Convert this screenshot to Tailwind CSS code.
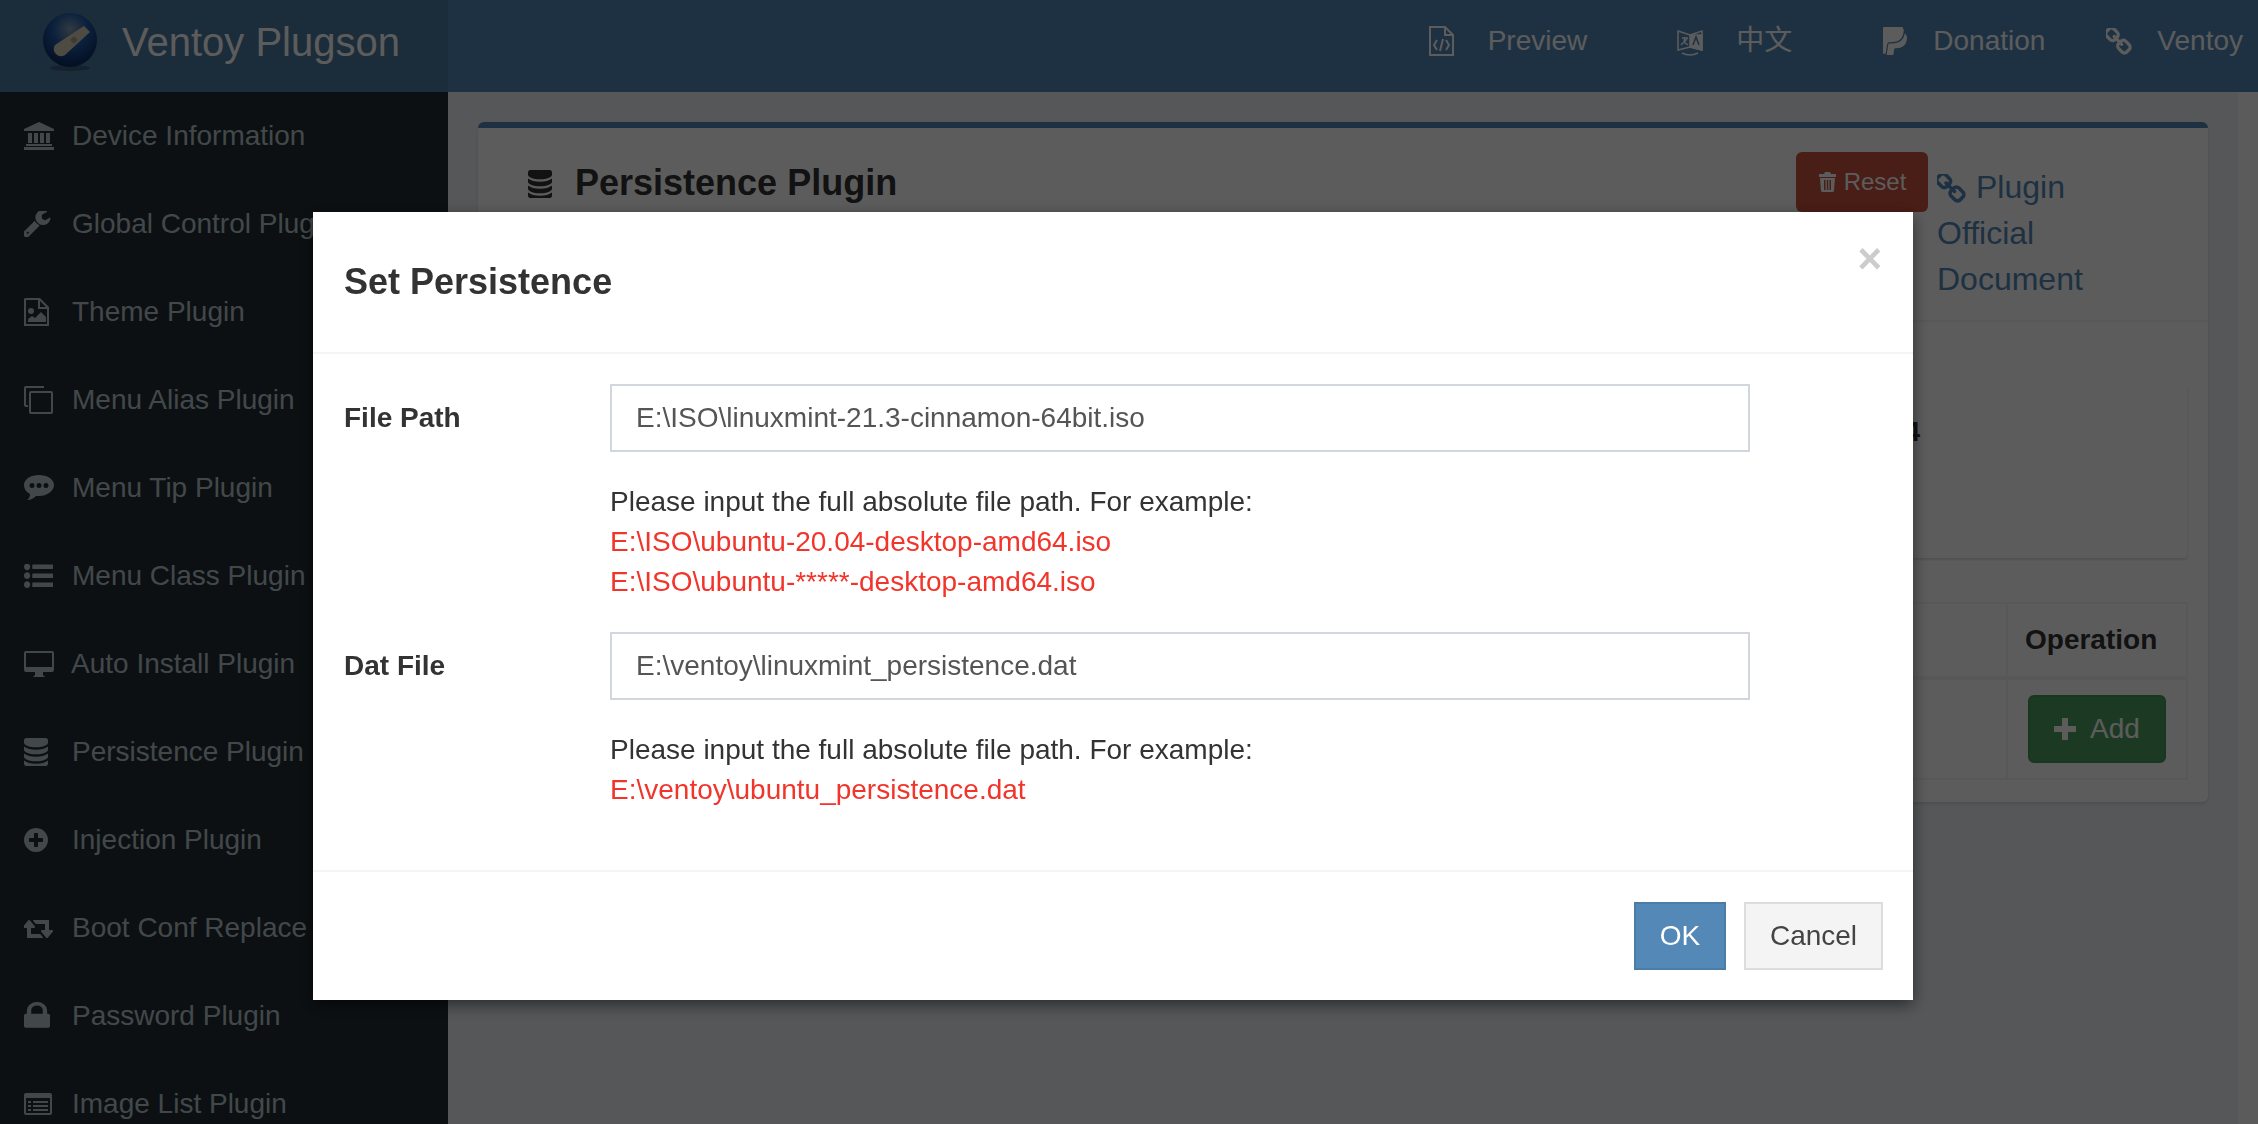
<!DOCTYPE html>
<html lang="en">

<head>
  <meta charset="UTF-8">
  <meta name="viewport" content="width=device-width, initial-scale=1.0">
  <title>Ventoy Plugson</title>
  <script src="https://cdn.jsdelivr.net/npm/@tailwindcss/browser@4"></script>
</head>

<body class="h-screen overflow-hidden bg-[#ecf0f5] font-['Liberation_Sans','Noto_Sans_CJK_SC',sans-serif] text-[28px] text-[#333]">

  <!-- top bar -->
  <header class="flex h-[92px] bg-[#5388b7] text-white">
    <div class="flex w-[448px] shrink-0 items-center bg-[#4b7aa1] pb-[8px] pl-[40px]">
      <svg class="h-[60px] w-[60px]" viewBox="0 0 60 60">
        <defs>
          <radialGradient id="ball" cx="50%" cy="30%" r="65%">
            <stop offset="0" stop-color="#8a9fb8" />
            <stop offset="0.5" stop-color="#1f5aa8" />
            <stop offset="1" stop-color="#0d2f66" />
          </radialGradient>
        </defs>
        <ellipse cx="30" cy="56" rx="20" ry="3" fill="#3c5f80" />
        <circle cx="30" cy="28" r="27" fill="url(#ball)" />
        <path d="M44 14l6 6-25 23q-5 3-9-1t-1-9z" fill="#d8d2b8" />
        <path d="M34 24l4 4-4 4-4-4z" fill="#aaa48c" />
      </svg>
      <span class="ml-[22px] text-[40px]">Ventoy Plugson</span>
    </div>
    <nav class="flex flex-1 items-center justify-end pb-[10px] pr-[15px]">
      <a class="flex items-center">
        <svg class="h-[30px] w-[25px]" viewBox="0 0 25 30" fill="none" stroke="currentColor" stroke-width="2"><path d="M1 1h15l8 8v20H1zM16 1v8h8" /><path d="M8 14l-3 5 3 5M17 14l3 5-3 5M14 13l-3 12" /></svg>
        <span class="ml-[34px]">Preview</span>
      </a>
      <a class="ml-[90px] flex items-center">
        <svg class="h-[30px] w-[26px]" viewBox="0 0 26 30" fill="none" stroke="currentColor" stroke-width="1.5"><path d="M1 5l12 4 12-4v19l-12-3-12 3z" /><path d="M13 9h12v15l-12-3z" fill="currentColor" /><path d="M5 12h6M8 11l-1 5 4 3M10 13l-6 6" /><path d="M16 19l3-8 3 8" stroke="#5388b7" /><path d="M5 27q8 4 16 0" /></svg>
        <span class="ml-[33px]">中文</span>
      </a>
      <a class="ml-[91px] flex items-center">
        <svg class="h-[28px] w-[24px]" viewBox="230 128 1300 1536" fill="currentColor" preserveAspectRatio="none"><path d="M1519 646q18 84-4 204-87 444-565 444h-44q-25 0-44 16.5t-24 42.5l-4 19-55 346-2 15q-5 26-24.5 42.5t-44.5 16.5h-251q-21 0-33-15t-9-36q9-56 26.5-168t26.5-168 27-167.5 27-167.5q5-37 43-37h131q133 2 236-21 175-39 287-144 102-95 155-246 24-70 35-133 1-6 2.5-7.5t3.5-1 6 3.5q79 59 98 162zm-172-282q0 107-46 236-80 233-302 315-113 40-239 42 0 1-90 1l-90-1q-100 0-118 96-2 8-85 530-1 10-12 10h-295q-22 0-36.5-16.5t-11.5-38.5l232-1471q5-29 27.5-48t51.5-19h598q34 0 97.5 13t111.5 32q107 41 163.5 123t56.5 196z" /></svg>
        <span class="ml-[26px]">Donation</span>
      </a>
      <a class="ml-[61px] flex items-center">
        <svg class="h-[27px] w-[26px]" viewBox="128 128 1536 1536" fill="currentColor" preserveAspectRatio="none"><path d="M1456 1216q0-40-28-68l-208-208q-28-28-68-28-42 0-72 32 3 3 19 18.5t21.5 21.5 15 19 13 25.5 3.5 27.5q0 40-28 68t-68 28q-15 0-27.5-3.5t-25.5-13-19-15-21.5-21.5-18.5-19q-33 31-33 73 0 40 28 68l206 207q27 27 68 27 40 0 68-26l147-146q28-28 28-67zm-703-705q0-40-28-68l-206-207q-28-28-68-28-39 0-68 27l-147 146q-28 28-28 67 0 40 28 68l208 208q27 27 68 27 42 0 72-31-3-3-19-18.5t-21.5-21.5-15-19-13-25.5-3.5-27.5q0-40 28-68t68-28q15 0 27.5 3.5t25.5 13 19 15 21.5 21.5 18.5 19q33-31 33-73zm895 705q0 120-85 203l-147 146q-83 83-203 83-121 0-204-85l-206-207q-83-83-83-203 0-123 88-209l-88-88q-86 88-208 88-120 0-204-84l-208-208q-84-84-84-204t85-203l147-146q83-83 203-83 121 0 204 85l206 207q83 83 83 203 0 123-88 209l88 88q86-88 208-88 120 0 204 84l208 208q84 84 84 204z" /></svg>
        <span class="ml-[25px]">Ventoy</span>
      </a>
    </nav>
  </header>

  <div class="flex h-[1032px]">

    <!-- sidebar -->
    <aside class="w-[448px] shrink-0 overflow-hidden whitespace-nowrap bg-[#222d32] text-[#b8c7ce]">
      <a class="flex h-[88px] items-center pl-[24px]">
        <span class="w-[49px] shrink-0"><svg class="h-[28px] w-[30px]" viewBox="0 0 30 28" fill="currentColor"><path d="M15 0l15 7v2H0V7zM4 11h4v10H4zM10 11h4v10h-4zM16 11h4v10h-4zM22 11h4v10h-4zM2 22h26v2H2zM0 25h30v3H0z" /></svg></span><span class="-ml-[1px]">Device Information</span>
      </a>
      <a class="flex h-[88px] items-center pl-[24px]">
        <span class="w-[49px] shrink-0"><svg class="h-[26px] w-[27px]" viewBox="128 128 1536 1536" fill="currentColor"><path d="M384 1408q0-26-19-45t-45-19-45 19-19 45 19 45 45 19 45-19 19-45zm644-420l-682 682q-37 37-90 37-52 0-91-37l-106-108q-38-36-38-90 0-53 38-91l681-681q39 98 114.5 173.5t173.5 114.5zm634-435q0 39-23 106-47 134-164.5 217.5t-258.5 83.5q-185 0-316.5-131.5t-131.5-316.5 131.5-316.5 316.5-131.5q58 0 121.5 16.5t107.5 46.5q16 11 16 28t-16 28l-293 169v224l193 107q5-3 79-48.5t135.5-81 70.5-35.5q15 0 23.5 10t8.5 25z" /></svg></span><span class="-ml-[1px]">Global Control Plugin</span>
      </a>
      <a class="flex h-[88px] items-center pl-[24px]">
        <span class="w-[49px] shrink-0"><svg class="h-[28px] w-[25px]" viewBox="0 0 25 28" fill="currentColor"><path fill-rule="evenodd" d="M1 0h15l9 9v19H0V1zM2 2v24h21V11h-9V2zM16 3v6h6z" /><circle cx="7" cy="13" r="3" /><path d="M4 24v-3l4-3 3 2 6-6 5 5v5z" /></svg></span><span class="-ml-[1px]">Theme Plugin</span>
      </a>
      <a class="flex h-[88px] items-center pl-[24px]">
        <span class="w-[49px] shrink-0"><svg class="h-[28px] w-[29px]" viewBox="0 0 29 28" fill="none" stroke="currentColor" stroke-width="2"><path d="M20 1H2Q1 1 1 2v17q0 1 1 1h2" /><path d="M7 6h20q1 0 1 1v19q0 1-1 1H7q-1 0-1-1V7q0-1 1-1z" /></svg></span><span class="-ml-[1px]">Menu Alias Plugin</span>
      </a>
      <a class="flex h-[88px] items-center pl-[24px]">
        <span class="w-[49px] shrink-0"><svg class="h-[26px] w-[30px]" viewBox="0 0 30 26" fill="currentColor"><path fill-rule="evenodd" d="M15 0c8 0 15 4 15 10s-7 11-15 11h-3c-2 2-5 4-9 4 2-1 3-3 3-6-4-2-6-5-6-9C0 4 7 0 15 0zM8 8a2.500 2.500 0 100 5 2.500 2.500 0 000-5zM15 8a2.500 2.500 0 100 5 2.500 2.500 0 000-5zM22 8a2.500 2.500 0 100 5 2.500 2.500 0 000-5z" /></svg></span><span class="-ml-[1px]">Menu Tip Plugin</span>
      </a>
      <a class="flex h-[88px] items-center pl-[24px]">
        <span class="w-[49px] shrink-0"><svg class="h-[24px] w-[29px]" viewBox="0 224 1792 1376" preserveAspectRatio="none" fill="currentColor"><path d="M384 1408q0 80-56 136t-136 56-136-56-56-136 56-136 136-56 136 56 56 136zm0-512q0 80-56 136t-136 56-136-56-56-136 56-136 136-56 136 56 56 136zm1408 416v192q0 13-9.5 22.5t-22.5 9.5h-1216q-13 0-22.5-9.5t-9.5-22.5v-192q0-13 9.5-22.5t22.5-9.5h1216q13 0 22.5 9.5t9.5 22.5zm-1408-928q0 80-56 136t-136 56-136-56-56-136 56-136 136-56 136 56 56 136zm1408 416v192q0 13-9.5 22.5t-22.5 9.5h-1216q-13 0-22.5-9.5t-9.5-22.5v-192q0-13 9.5-22.5t22.5-9.5h1216q13 0 22.5 9.5t9.5 22.5zm0-512v192q0 13-9.5 22.5t-22.5 9.5h-1216q-13 0-22.5-9.5t-9.5-22.5v-192q0-13 9.5-22.5t22.5-9.5h1216q13 0 22.5 9.5t9.5 22.5z" /></svg></span><span class="-ml-[1px]">Menu Class Plugin</span>
      </a>
      <a class="flex h-[88px] items-center pl-[24px]">
        <span class="w-[47px] shrink-0"><svg class="h-[26px] w-[30px]" viewBox="0 0 30 26" fill="currentColor"><path fill-rule="evenodd" d="M2 0h26a2 2 0 012 2v17a2 2 0 01-2 2H19v3l2 2H9l2-2v-3H2a2 2 0 01-2-2V2a2 2 0 012-2zM2 2v14h26V2z" /></svg></span>Auto Install Plugin
      </a>
      <a class="flex h-[88px] items-center pl-[24px]">
        <span class="w-[49px] shrink-0"><svg class="h-[28px] w-[24px]" viewBox="128 128 1536 1536" preserveAspectRatio="none" fill="currentColor"><path d="M896 768q237 0 443-43t325-127v170q0 69-103 128t-280 93.5-385 34.5-385-34.5-280-93.5-103-128v-170q119 84 325 127t443 43zm0 768q237 0 443-43t325-127v170q0 69-103 128t-280 93.5-385 34.5-385-34.5-280-93.5-103-128v-170q119 84 325 127t443 43zm0-384q237 0 443-43t325-127v170q0 69-103 128t-280 93.5-385 34.5-385-34.5-280-93.5-103-128v-170q119 84 325 127t443 43zm0-1152q208 0 385 34.5t280 93.5 103 128v128q0 69-103 128t-280 93.5-385 34.5-385-34.5-280-93.5-103-128v-128q0-69 103-128t280-93.5 385-34.5z" /></svg></span><span class="-ml-[1px]">Persistence Plugin</span>
      </a>
      <a class="flex h-[88px] items-center pl-[24px]">
        <span class="w-[49px] shrink-0"><svg class="h-[24px] w-[24px]" viewBox="128 128 1536 1536" fill="currentColor"><path d="M1344 960v-128q0-26-19-45t-45-19h-256v-256q0-26-19-45t-45-19h-128q-26 0-45 19t-19 45v256h-256q-26 0-45 19t-19 45v128q0 26 19 45t45 19h256v256q0 26 19 45t45 19h128q26 0 45-19t19-45v-256h256q26 0 45-19t19-45zm320-64q0 209-103 385.5t-279.5 279.5-385.5 103-385.5-103-279.5-279.5-103-385.5 103-385.5 279.5-279.5 385.5-103 385.5 103 279.5 279.5 103 385.5z" /></svg></span><span class="-ml-[1px]">Injection Plugin</span>
      </a>
      <a class="flex h-[88px] items-center pl-[24px]">
        <span class="w-[49px] shrink-0"><svg class="h-[20px] w-[30px]" viewBox="0 256 1920 1280" preserveAspectRatio="none" fill="currentColor"><path d="M1216 1504q0 13-9.5 22.5t-22.5 9.5h-960q-8 0-13.5-2t-9-7-5.5-8-3-11.5-1-11.5v-600h-192q-26 0-45-19t-19-45q0-24 15-41l320-384q19-22 49-22t49 22l320 384q15 17 15 41 0 26-19 45t-45 19h-192v384h576q16 0 25 11l160 192q7 10 7 21zm640-416q0 24-15 41l-320 384q-20 23-49 23t-49-23l-320-384q-15-17-15-41 0-26 19-45t45-19h192v-384h-576q-16 0-25-12l-160-192q-7-9-7-20 0-13 9.5-22.5t22.5-9.5h960q8 0 13.5 2t9 7 5.5 8 3 11.5 1 11.5v600h192q26 0 45 19t19 45z" /></svg></span><span class="-ml-[1px]">Boot Conf Replace Plugin</span>
      </a>
      <a class="flex h-[88px] items-center pl-[24px]">
        <span class="w-[49px] shrink-0"><svg class="h-[28px] w-[26px]" viewBox="320 128 1152 1536" preserveAspectRatio="none" fill="currentColor"><path d="M640 768h512v-192q0-106-75-181t-181-75-181 75-75 181v192zm832 96v576q0 40-28 68t-68 28h-960q-40 0-68-28t-28-68v-576q0-40 28-68t68-28h32v-192q0-184 132-316t316-132 316 132 132 316v192h32q40 0 68 28t28 68z" /></svg></span><span class="-ml-[1px]">Password Plugin</span>
      </a>
      <a class="flex h-[88px] items-center pl-[24px]">
        <span class="w-[49px] shrink-0"><svg class="h-[22px] w-[28px]" viewBox="0 0 28 22" fill="currentColor"><path fill-rule="evenodd" d="M2 0h24a2 2 0 012 2v18a2 2 0 01-2 2H2a2 2 0 01-2-2V2a2 2 0 012-2zM2 5v15h24V5zM4 8h3v2H4zM9 8h15v2H9zM4 12h3v2H4zM9 12h15v2H9zM4 16h3v2H4zM9 16h15v2H9z" /></svg></span><span class="-ml-[1px]">Image List Plugin</span>
      </a>
    </aside>

    <!-- page content -->
    <main class="min-w-0 flex-1 px-[30px] pt-[30px]">
      <section class="h-[680px] rounded-md border-t-[6px] border-[#5388b7] bg-white shadow-[0_2px_3px_rgba(0,0,0,0.1)]">
        <div class="flex h-[194px] border-b-2 border-[#f4f4f4]">
          <div class="flex flex-1 items-start pl-[50px] pt-[33px]">
            <svg class="mt-[9px] h-[28px] w-[24px]" viewBox="128 128 1536 1536" preserveAspectRatio="none" fill="currentColor"><path d="M896 768q237 0 443-43t325-127v170q0 69-103 128t-280 93.5-385 34.5-385-34.5-280-93.5-103-128v-170q119 84 325 127t443 43zm0 768q237 0 443-43t325-127v170q0 69-103 128t-280 93.5-385 34.5-385-34.5-280-93.5-103-128v-170q119 84 325 127t443 43zm0-384q237 0 443-43t325-127v170q0 69-103 128t-280 93.5-385 34.5-385-34.5-280-93.5-103-128v-170q119 84 325 127t443 43zm0-1152q208 0 385 34.5t280 93.5 103 128v128q0 69-103 128t-280 93.5-385 34.5-385-34.5-280-93.5-103-128v-128q0-69 103-128t280-93.5 385-34.5z" /></svg>
            <h3 class="ml-[23px] text-[36px] leading-[44px] font-bold">Persistence Plugin</h3>
          </div>
          <button class="mt-[24px] flex h-[60px] w-[132px] items-center justify-center rounded-md bg-[#c8533d] text-[24px] text-white">
            <svg class="mr-[7px] h-[20px] w-[19px]" viewBox="0 0 19 20" fill="currentColor"><path fill-rule="evenodd" d="M7 0h5l1 2h5v3H1V2h5zM2 6h15l-1 13-1 1H4l-1-1zM6 8v10h1.500V8zM8.800 8v10h1.500V8zM11.500 8v10H13V8z" /></svg>Reset
          </button>
          <a class="mt-[36px] ml-[9px] w-[271px] pr-[71px] text-[32px] leading-[46px] text-[#5388b7]">
            <svg class="mr-[10px] inline-block h-[29px] w-[29px] align-[-5px]" viewBox="128 128 1536 1536" fill="currentColor"><path d="M1456 1216q0-40-28-68l-208-208q-28-28-68-28-42 0-72 32 3 3 19 18.5t21.5 21.5 15 19 13 25.5 3.5 27.5q0 40-28 68t-68 28q-15 0-27.5-3.5t-25.5-13-19-15-21.5-21.5-18.5-19q-33 31-33 73 0 40 28 68l206 207q27 27 68 27 40 0 68-26l147-146q28-28 28-67zm-703-705q0-40-28-68l-206-207q-28-28-68-28-39 0-68 27l-147 146q-28 28-28 67 0 40 28 68l208 208q27 27 68 27 42 0 72-31-3-3-19-18.5t-21.5-21.5-15-19-13-25.5-3.5-27.5q0-40 28-68t68-28q15 0 27.5 3.5t25.5 13 19 15 21.5 21.5 18.5 19q33-31 33-73zm895 705q0 120-85 203l-147 146q-83 83-203 83-121 0-204-85l-206-207q-83-83-83-203 0-123 88-209l-88-88q-86 88-208 88-120 0-204-84l-208-208q-84-84-84-204t85-203l147-146q83-83 203-83 121 0 204 85l206 207q83 83 83 203 0 123-88 209l88 88q86-88 208-88 120 0 204 84l208 208q84 84 84 204z" /></svg>Plugin Official Document
          </a>
        </div>
        <div class="px-[20px] pt-[63px]">
          <div class="h-[173px] rounded-sm border-r border-[#f4f4f4] bg-white pr-[267px] pt-[26px] text-right font-bold shadow-[0_2px_2px_rgba(0,0,0,0.12)]">4</div>
          <table class="mt-[44px] w-full border-collapse border-2 border-[#f4f4f4]">
            <thead>
              <tr class="h-[75px] border-b-4 border-[#f4f4f4]">
                <th class="border-r-2 border-[#f4f4f4]"></th>
                <th class="w-[180px] pl-[17px] text-left font-bold">Operation</th>
              </tr>
            </thead>
            <tbody>
              <tr class="h-[101px]">
                <td class="border-r-2 border-[#f4f4f4]"></td>
                <td class="pl-[20px]">
                  <button class="flex h-[68px] w-[138px] items-center justify-center rounded-md border-2 border-[#459558] bg-[#4ea162] text-white">
                    <svg class="mr-[14px] h-[22px] w-[22px]" viewBox="0 0 22 22" fill="currentColor"><path d="M8 0h6v8h8v6h-8v8H8v-8H0V8h8z" /></svg>Add
                  </button>
                </td>
              </tr>
            </tbody>
          </table>
        </div>
      </section>
    </main>

    <!-- page scrollbar track -->
    <div class="w-[20px] shrink-0 bg-[#fbfbfb]"></div>
  </div>

  <!-- modal -->
  <div class="fixed inset-0 bg-black/64">
    <div class="ml-[313px] mt-[212px] w-[1600px] bg-white shadow-[0_5px_15px_rgba(0,0,0,0.5)]">
      <div class="flex h-[142px] items-center justify-between border-b-2 border-[#f4f4f4] pl-[31px] pr-[31px]">
        <h4 class="text-[36px] font-bold">Set Persistence</h4>
        <span class="-mt-[47px] text-[42px] leading-none font-bold text-[#ccc]">×</span>
      </div>
      <div class="px-[31px] pt-[30px] pb-[60px]">
        <div class="flex">
          <label class="h-[68px] w-[266px] shrink-0 font-bold leading-[68px]">File Path</label>
          <div class="w-[1140px]">
            <input class="h-[68px] w-full border-2 border-[#d2d6de] px-[24px] text-[#555]" value="E:\ISO\linuxmint-21.3-cinnamon-64bit.iso">
            <div class="mt-[30px] mb-[30px] leading-[40px]">
              Please input the full absolute file path. For example:
              <div class="text-[#f1352b]">E:\ISO\ubuntu-20.04-desktop-amd64.iso</div>
              <div class="text-[#f1352b]">E:\ISO\ubuntu-*****-desktop-amd64.iso</div>
            </div>
          </div>
        </div>
        <div class="flex">
          <label class="h-[68px] w-[266px] shrink-0 font-bold leading-[68px]">Dat File</label>
          <div class="w-[1140px]">
            <input class="h-[68px] w-full border-2 border-[#d2d6de] px-[24px] text-[#555]" value="E:\ventoy\linuxmint_persistence.dat">
            <div class="mt-[30px] leading-[40px]">
              Please input the full absolute file path. For example:
              <div class="text-[#f1352b]">E:\ventoy\ubuntu_persistence.dat</div>
            </div>
          </div>
        </div>
      </div>
      <div class="flex justify-end gap-[18px] border-t-2 border-[#f4f4f4] p-[30px]">
        <button class="h-[68px] w-[92px] border-2 border-[#4a7ca8] bg-[#5388b7] text-white">OK</button>
        <button class="h-[68px] w-[139px] border-2 border-[#ddd] bg-[#f4f4f4] text-[#444]">Cancel</button>
      </div>
    </div>
  </div>

</body>

</html>
